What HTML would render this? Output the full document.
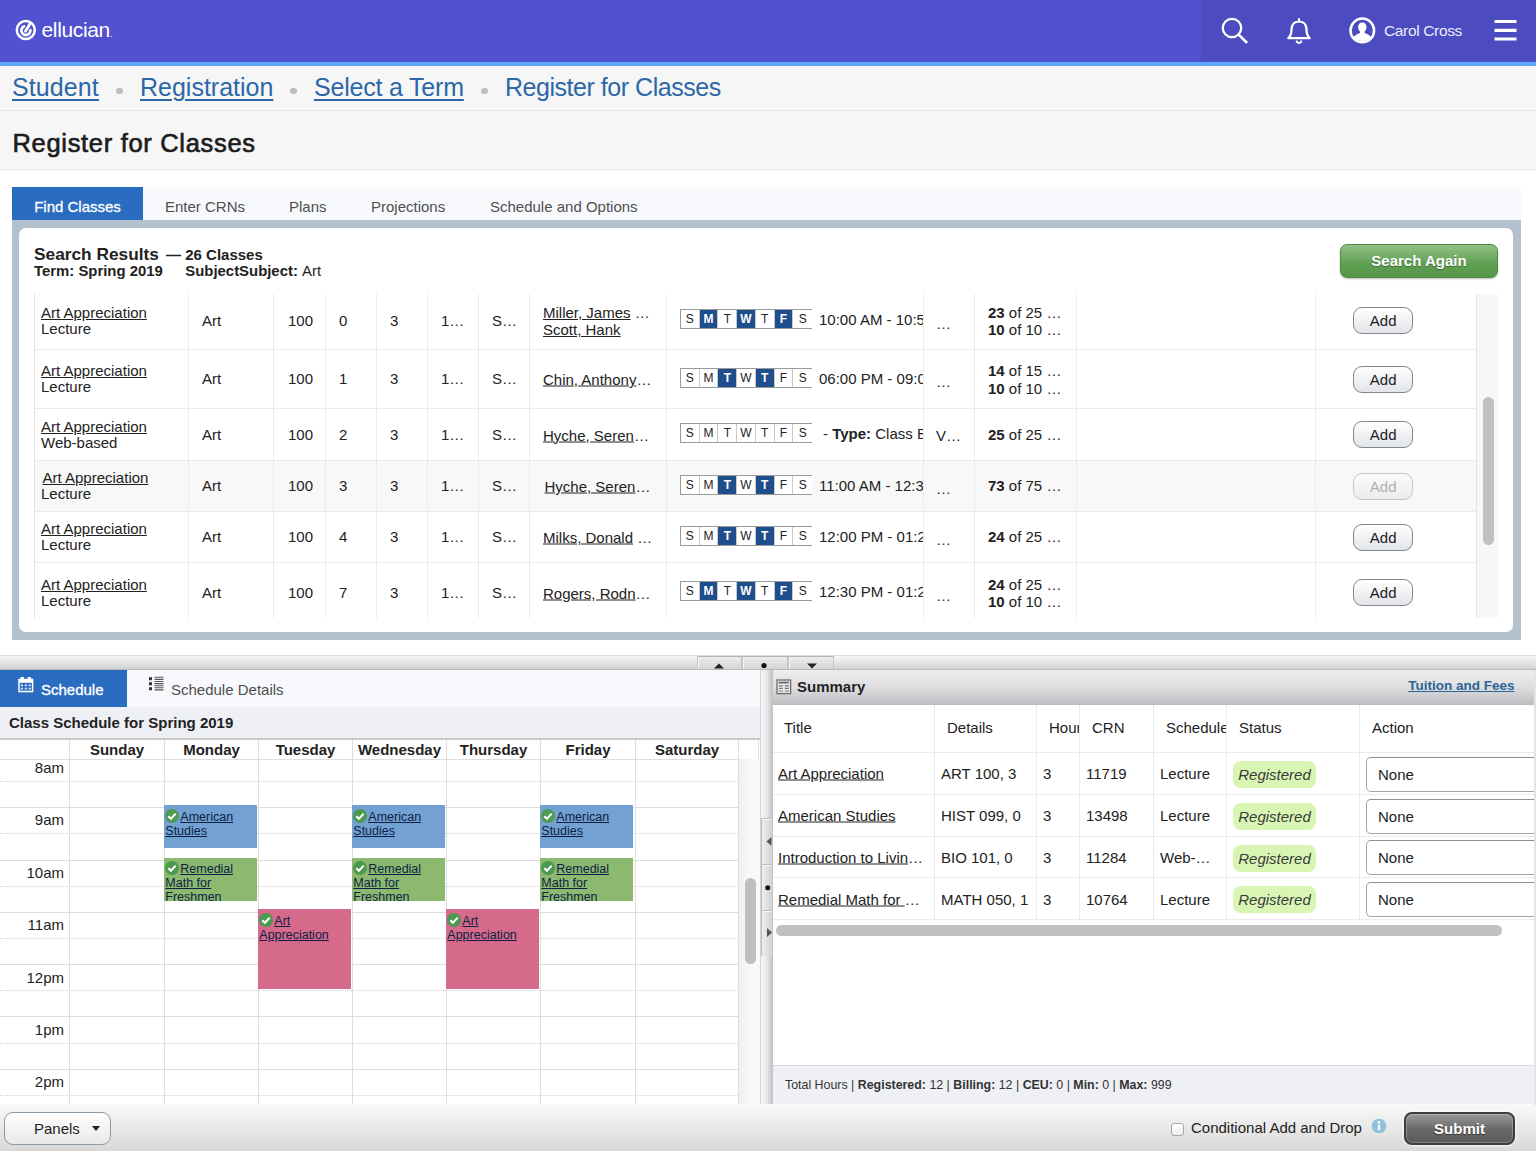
<!DOCTYPE html>
<html lang="en">
<head>
<meta charset="utf-8">
<title>Register for Classes</title>
<style>
*{box-sizing:border-box;margin:0;padding:0}
html,body{width:1536px;height:1151px;overflow:hidden;background:#fff;font-family:"Liberation Sans",Arial,sans-serif;color:#222;}
.abs{position:absolute}
a{color:inherit}
/* header */
#hdr{position:absolute;left:0;top:0;width:1536px;height:62px;background:#5252d0}
#hdr .right{position:absolute;left:1201px;top:0;width:335px;height:62px;background:#4c4bbf}
#stripe{position:absolute;left:0;top:61px;width:1536px;height:5.500px;background:linear-gradient(#3f56c6 0,#3f56c6 1px,#66a6ff 1.500px,#5a9fe2)}
#logo{position:absolute;left:41.500px;top:18px;font-size:21px;color:#fff;letter-spacing:-0.35px}
#user{position:absolute;left:1384px;top:22px;font-size:15.500px;color:#ececfb;letter-spacing:-0.35px}
/* breadcrumb */
#bc{position:absolute;left:0;top:66px;width:1536px;height:45px;background:#f6f6f6;border-bottom:1px solid #e6e6e6}
#bc span,#bc a{position:absolute;top:7px;font-size:25px;color:#2c67a8;white-space:nowrap}
#bc a{text-decoration:underline;text-decoration-thickness:1.600px;text-underline-offset:3px}
#bc i{position:absolute;top:21.500px;width:6.500px;height:6.500px;margin-left:.8px;border-radius:4px;background:#bdbdbd}
#ttl{position:absolute;left:0;top:111px;width:1536px;height:59px;background:#f6f6f6;border-bottom:1px solid #e6e6e6}
#ttl h1{position:absolute;left:12.500px;top:18px;font-size:25.500px;letter-spacing:.68px;font-weight:normal;-webkit-text-stroke:.65px #1c1c1c;color:#1c1c1c;white-space:nowrap}
/* tabs */
#tabs{position:absolute;left:12px;top:187px;width:1509px;height:33px;background:#f8f9fc}
#tabs .act{-webkit-text-stroke:.3px #fff;position:absolute;left:0;top:0;width:131px;height:33px;background:#2a6cc0;color:#fff;font-size:15px;text-align:center;line-height:40px}
#tabs span{position:absolute;top:0;font-size:15px;color:#4f4f4f;line-height:40px;white-space:nowrap}
#wrap{position:absolute;left:12px;top:220px;width:1509px;height:420px;background:#b3c0cd}
#panel{position:absolute;left:7px;top:8px;width:1494px;height:404px;background:#fff;border-radius:7px;overflow:hidden}

/* search panel */
#sr1{position:absolute;left:15px;top:15.500px;font-size:15px;font-weight:bold;color:#222;white-space:nowrap}
#sr1 b{font-size:17.300px;margin-right:3px}
#sr2{position:absolute;left:15px;top:35.200px;font-size:14.900px;font-weight:bold;color:#222;white-space:nowrap}
#sr2 span{font-weight:normal}
#again{position:absolute;left:1321px;top:16px;width:158px;height:34px;border:1px solid #4b8a3f;border-radius:7px;background:linear-gradient(#93c088,#5f9f52 60%,#56964a);color:#fff;font-weight:bold;font-size:15px;text-align:center;line-height:31px;text-shadow:0 1px 1px rgba(0,0,0,.35);box-shadow:0 1px 2px rgba(0,0,0,.25)}
#grid{position:absolute;left:15px;top:66px;width:1443px;height:323.500px;overflow:hidden;border-left:1px solid #e3e3e3;border-right:1px solid #e3e3e3}
.row{position:absolute;left:0;width:1441px;border-bottom:1px solid #ebebeb;background:#fff}
.row.alt{background:#f8f8f8}
.c{position:absolute;top:0;bottom:0;border-left:1px solid #ebebeb;font-size:15px;color:#222;white-space:nowrap;overflow:hidden}
.c .t{position:absolute;left:13px;top:50%;transform:translateY(-50%);line-height:16px}
.c a{text-decoration:underline;color:#222}
.days{position:absolute;left:13px;top:50%;margin-top:-11.500px;height:20px;width:132px;border:1px solid #9a9a9a;border-right:none;background:#fff;display:flex}
.days i{display:block;width:18.800px;height:18px;border-right:1px solid #c9c9c9;font-style:normal;font-size:12px;line-height:19.500px;text-align:center;color:#222}
.days i:last-child{border-right:none}
.days i.on{background:#1f4e8c;color:#fff;font-weight:bold}
.tm{position:absolute;left:152px;top:50%;transform:translateY(-50%);margin-top:-1.500px;font-size:15px}
.add{position:absolute;left:37.700px;top:50%;margin-top:-13.500px;width:60px;height:27px;border:1.300px solid #7f8791;border-radius:9px;background:linear-gradient(#fff,#e2e4e9);font-size:15px;text-align:center;line-height:25px;color:#222}
.add.dis{color:#b0b0b0;border-color:#c6c6c6;background:linear-gradient(#fbfbfb,#ececec)}
#vsb{position:absolute;left:1458px;top:66px;width:21px;height:323.500px;background:#f7f7f7}
#vsb i{position:absolute;left:6px;top:103px;width:10.500px;height:148px;border-radius:6px;background:#c1c1c1}

/* splitter */
#hsplit{position:absolute;left:0;top:655px;width:1536px;height:15px;background:linear-gradient(#f4f4f4,#e6e6e6 50%,#d2d2d2);border-top:1px solid #dedede;border-bottom:1px solid #b9b9b9}
#hsplit i{position:absolute;top:0;height:13px;border:1px solid #c4c4c4;border-top-color:#b4b4b4;border-bottom:none;background:linear-gradient(#ececec,#d6d6d6);box-shadow:inset 1px 0 0 #f6f6f6}
#hsplit svg{position:absolute;left:0;top:0}
/* schedule panel */
#sch{position:absolute;left:0;top:670px;width:761px;height:435px;background:#fff;overflow:hidden}
#stabs{position:absolute;left:0;top:0;width:761px;height:37px;background:#f8f9fc}
#stabs .act{-webkit-text-stroke:.3px #fff;position:absolute;left:0;top:0;width:127px;height:37px;background:#2a6cc0;color:#fff;font-size:15px;line-height:39px;padding-left:41px}
#stabs span{position:absolute;left:171px;top:0;line-height:39px;font-size:15px;color:#4f4f4f}
#ctitle{position:absolute;left:0;top:37px;width:761px;height:33px;background:#eef0f5;border-bottom:2px solid #c9c9c9;font-size:15px;font-weight:bold;color:#222;padding-left:9px;line-height:31px}
#cal{position:absolute;left:0;top:70px;width:761px;height:365px;background:#fff}
#cal .vl{position:absolute;top:0;width:1px;height:365px;background:#dedede}
#cal .hl{position:absolute;left:0;width:738px;height:1px;background:#dedede}
#cal .dl{position:absolute;left:0;width:738px;height:0;border-top:1px dotted #d4d4d4}
#cal .dh{position:absolute;top:0;height:19px;font-size:15px;font-weight:bold;text-align:center;line-height:20px;color:#222}
#cal .hr{position:absolute;left:0;width:64px;text-align:right;font-size:15px;color:#222;line-height:17px}
.ev{position:absolute;width:92.400px;overflow:hidden;font-size:12.500px;line-height:14px;color:#0d1f44;padding:3.500px 1px 0 1px}
.ev a{text-decoration:underline}
.ev svg{display:inline-block;vertical-align:-2px;margin-right:1px}
#cvsb{position:absolute;left:745.300px;top:208px;width:10.400px;height:85.500px;border-radius:5.200px;background:#bfbfbf}
/* vertical splitter */
#vsplit{position:absolute;left:760px;top:670px;width:12px;height:435px;background:linear-gradient(90deg,#f7f7f7,#e6e6e6 55%,#c4c4c4);border-left:1px solid #d4d4d4}
#vsplit i{position:absolute;left:0;width:11px;height:46px;border:1px solid #bdbdbd;border-right:none;border-bottom:none;background:linear-gradient(90deg,#eeeeee,#d2d2d2);box-shadow:inset 0 1px 0 #f8f8f8}
#ctrack{position:absolute;left:739px;top:19px;width:22px;height:346px;background:linear-gradient(90deg,#f0f0f0,#f8f8f8 40%,#fafafa)}
/* summary */
#sum{position:absolute;left:772px;top:670px;width:764px;height:435px;background:#fff;border-left:1px solid #c4c4c4;overflow:hidden}
#sumh{position:absolute;left:0;top:0;width:762px;height:35px;background:linear-gradient(#eeeeee,#dedee0 50%,#bdbdc1);font-size:15px;font-weight:bold;color:#222;line-height:33px;padding-left:24px}
#sumh a{position:absolute;right:20.500px;top:-1px;font-size:13.500px;color:#2c6496;text-decoration:underline}
#sum .sr{position:absolute;left:0;width:764px;border-bottom:1px solid #ebebeb}
#sum .sc{position:absolute;top:0;bottom:0;border-left:1px solid #ebebeb;font-size:15px;white-space:nowrap;overflow:hidden;color:#222}
#sum .sc span{position:absolute;left:6px;top:50%;transform:translateY(-50%)}
#sum .sc a{text-decoration:underline}
.reg{position:absolute;left:6px;top:50%;margin-top:-12.300px;height:27px;width:83px;border-radius:8px;background:#d9f5b3;font-style:italic;font-size:15px;color:#3a3a3a;line-height:28px;text-align:center}
.sel{position:absolute;left:6px;top:50%;margin-top:-16.500px;height:35px;width:190px;border:1px solid #a3a3a3;border-top-color:#8e8e8e;border-radius:5px;background:#fff;font-size:15px;line-height:33px;padding-left:11px;color:#222}
#hsb{position:absolute;left:3px;top:255px;width:726px;height:11px;border-radius:6px;background:#c1c1c1}
#sumf{position:absolute;left:0;top:395px;width:764px;height:40px;background:#eef0f5;border-top:1px solid #d6d8dd;font-size:12.400px;color:#333;line-height:38px;padding-left:12px}
/* footer */
#ftr{position:absolute;left:0;top:1104px;width:1536px;height:47px;background:linear-gradient(#f9f9f9,#ececec 40%,#d8d8d8)}
#panels{position:absolute;left:4px;top:8px;width:107px;height:33px;border:1.500px solid #8b98a5;border-radius:9px;background:linear-gradient(#fefefe,#e9e9e9);font-size:15px;line-height:31px;padding-left:29px;color:#222}
#panels:after{content:"";position:absolute;left:86.500px;top:12.500px;border:4.700px solid transparent;border-top:5.500px solid #222;border-bottom:none}
#cad{position:absolute;left:1191px;top:15px;font-size:15px;color:#222;white-space:nowrap}
#cb{position:absolute;left:1171px;top:19px;width:13px;height:13px;border:1px solid #a6a6a6;border-radius:3px;background:linear-gradient(#fff,#ececec)}
#submit{position:absolute;left:1404px;top:8px;width:111px;height:33px;border:2px solid #3d3d3d;border-radius:8px;background:linear-gradient(#9a9a9a,#6b6b6b 50%,#5a5a5a);color:#fff;font-size:15px;font-weight:bold;text-align:center;line-height:29px;text-shadow:0 1px 1px rgba(0,0,0,.5);box-shadow:inset 0 0 0 1px rgba(255,255,255,.22),0 0 2px 1px rgba(255,255,255,.8)}
</style>
</head>
<body>
<div id="hdr"><div class="right"></div>
<svg class="abs" style="left:0;top:0" width="1536" height="62" viewBox="0 0 1536 62" fill="none" stroke="#fff">
<circle cx="25.8" cy="30" r="9" stroke-width="2.5"/>
<path d="M25.2 26a4.5 4.500 0 1 0 5 3.200" stroke-width="2.700"/>
<path d="M30.400 23.200L25.400 31.200" stroke-width="2.700" stroke-linecap="round"/>
<circle cx="1232" cy="28" r="9.2" stroke-width="2.3"/>
<path d="M1238.6 34.6L1246.4 42.2" stroke-width="2.6" stroke-linecap="round"/>
<path d="M1299 19.2v2M1288.3 38.2c3-2.6 3.2-5.4 3.2-8.6 0-5 3.2-8.2 7.5-8.2s7.5 3.2 7.5 8.2c0 3.2 .2 6 3.2 8.6z" stroke-width="2.3" stroke-linejoin="round" stroke-linecap="round"/>
<path d="M1296.6 40.6a2.4 2.4 0 0 0 4.8 0" stroke-width="1.8"/>
<circle cx="1362.3" cy="30.4" r="11.8" stroke-width="2.5"/>
<path d="M1362.3 22.6c2.6 0 4.2 2 4.2 4.6 0 1.9-.8 3.4-1.9 4.3v1.4c2.8 .8 5.2 2.2 6.2 4.2a11 11 0 0 1-17 0c1-2 3.4-3.4 6.2-4.2v-1.4c-1.100-.9-1.900-2.400-1.900-4.300 0-2.600 1.600-4.600 4.200-4.600z" fill="#fff" stroke="none"/>
<path d="M1494.500 21.500h22M1494.500 30.400h22M1494.500 39h22" stroke-width="3.2"/>
</svg>
<div id="logo">ellucian<span style="font-size:9px">.</span></div>
<div id="user">Carol Cross</div>
</div>
<div id="stripe"></div>
<div id="bc">
<a style="left:12px;letter-spacing:.1px">Student</a><i style="left:115.500px"></i>
<a style="left:140px">Registration</a><i style="left:289.500px"></i>
<a style="left:314px;letter-spacing:-.2px">Select a Term</a><i style="left:480.500px"></i>
<span style="left:505px;letter-spacing:-.47px">Register for Classes</span>
</div>
<div id="ttl"><h1>Register for Classes</h1></div>
<div id="tabs">
<div class="act">Find Classes</div>
<span style="left:153px">Enter CRNs</span>
<span style="left:277px">Plans</span>
<span style="left:359px">Projections</span>
<span style="left:478px">Schedule and Options</span>
</div>
<div id="wrap"><div id="panel">
<div id="sr1"><b>Search Results</b> — 26 Classes</div>
<div id="sr2">Term: Spring 2019<i style="display:inline-block;width:22.500px"></i>SubjectSubject: <span>Art</span></div>
<div id="again">Search Again</div>
<div id="grid">
<div class="row" style="top:-2px;height:58px"><div class="c" style="left:-1px;width:154px;border-left:none"><div class="t" style="left:7px"><a>Art Appreciation</a><br>Lecture</div></div><div class="c" style="left:153px;width:85px"><div class="t">Art</div></div><div class="c" style="left:238px;width:52px"><div class="t" style="left:14px">100</div></div><div class="c" style="left:290px;width:51px"><div class="t">0</div></div><div class="c" style="left:341px;width:51px"><div class="t">3</div></div><div class="c" style="left:392px;width:51px"><div class="t">1…</div></div><div class="c" style="left:443px;width:51px"><div class="t">S…</div></div><div class="c" style="left:494px;width:137px"><div class="t" style="line-height:17px"><a>Miller, James</a> …<br><a>Scott, Hank</a></div></div><div class="c" style="left:631px;width:257px"><div class="days"><i>S</i><i class="on">M</i><i>T</i><i class="on">W</i><i>T</i><i class="on">F</i><i>S</i></div><div class="tm">10:00 AM - 10:50 AM</div></div><div class="c" style="left:888px;width:51px"><div class="t" style="left:12px;margin-top:3px">…</div></div><div class="c" style="left:939px;width:102px"><div class="t" style="line-height:17.500px"><b>23</b> of 25 …<br><b>10</b> of 10 …</div></div><div class="c" style="left:1041px;width:238.500px"></div><div class="c" style="left:1279.500px;width:161.500px"><div class="add">Add</div></div></div>
<div class="row" style="top:56px;height:59px"><div class="c" style="left:-1px;width:154px;border-left:none"><div class="t" style="left:7px"><a>Art Appreciation</a><br>Lecture</div></div><div class="c" style="left:153px;width:85px"><div class="t">Art</div></div><div class="c" style="left:238px;width:52px"><div class="t" style="left:14px">100</div></div><div class="c" style="left:290px;width:51px"><div class="t">1</div></div><div class="c" style="left:341px;width:51px"><div class="t">3</div></div><div class="c" style="left:392px;width:51px"><div class="t">1…</div></div><div class="c" style="left:443px;width:51px"><div class="t">S…</div></div><div class="c" style="left:494px;width:137px"><div class="t" style="line-height:17px"><a>Chin, Anthony</a>…</div></div><div class="c" style="left:631px;width:257px"><div class="days"><i>S</i><i>M</i><i class="on">T</i><i>W</i><i class="on">T</i><i>F</i><i>S</i></div><div class="tm">06:00 PM - 09:00 PM</div></div><div class="c" style="left:888px;width:51px"><div class="t" style="left:12px;margin-top:3px">…</div></div><div class="c" style="left:939px;width:102px"><div class="t" style="line-height:17.500px"><b>14</b> of 15 …<br><b>10</b> of 10 …</div></div><div class="c" style="left:1041px;width:238.500px"></div><div class="c" style="left:1279.500px;width:161.500px"><div class="add">Add</div></div></div>
<div class="row" style="top:115px;height:52px"><div class="c" style="left:-1px;width:154px;border-left:none"><div class="t" style="left:7px"><a>Art Appreciation</a><br>Web-based</div></div><div class="c" style="left:153px;width:85px"><div class="t">Art</div></div><div class="c" style="left:238px;width:52px"><div class="t" style="left:14px">100</div></div><div class="c" style="left:290px;width:51px"><div class="t">2</div></div><div class="c" style="left:341px;width:51px"><div class="t">3</div></div><div class="c" style="left:392px;width:51px"><div class="t">1…</div></div><div class="c" style="left:443px;width:51px"><div class="t">S…</div></div><div class="c" style="left:494px;width:137px"><div class="t" style="line-height:17px"><a>Hyche, Seren</a>…</div></div><div class="c" style="left:631px;width:257px"><div class="days"><i>S</i><i>M</i><i>T</i><i>W</i><i>T</i><i>F</i><i>S</i></div><div class="tm" style="left:156px">- <b>Type:</b> Class Begin</div></div><div class="c" style="left:888px;width:51px"><div class="t" style="left:12px;margin-top:1px">V…</div></div><div class="c" style="left:939px;width:102px"><div class="t" style="line-height:17.500px"><b>25</b> of 25 …</div></div><div class="c" style="left:1041px;width:238.500px"></div><div class="c" style="left:1279.500px;width:161.500px"><div class="add">Add</div></div></div>
<div class="row alt" style="top:167px;height:51px"><div class="c" style="left:-1px;width:154px;border-left:none"><div class="t" style="left:7px"><a style="margin-left:1.500px">Art Appreciation</a><br>Lecture</div></div><div class="c" style="left:153px;width:85px"><div class="t">Art</div></div><div class="c" style="left:238px;width:52px"><div class="t" style="left:14px">100</div></div><div class="c" style="left:290px;width:51px"><div class="t">3</div></div><div class="c" style="left:341px;width:51px"><div class="t">3</div></div><div class="c" style="left:392px;width:51px"><div class="t">1…</div></div><div class="c" style="left:443px;width:51px"><div class="t">S…</div></div><div class="c" style="left:494px;width:137px"><div class="t" style="line-height:17px;left:14.500px"><a>Hyche, Seren</a>…</div></div><div class="c" style="left:631px;width:257px"><div class="days"><i>S</i><i>M</i><i class="on">T</i><i>W</i><i class="on">T</i><i>F</i><i>S</i></div><div class="tm">11:00 AM - 12:30 PM</div></div><div class="c" style="left:888px;width:51px"><div class="t" style="left:12px;margin-top:3px">…</div></div><div class="c" style="left:939px;width:102px"><div class="t" style="line-height:17.500px"><b>73</b> of 75 …</div></div><div class="c" style="left:1041px;width:238.500px"></div><div class="c" style="left:1279.500px;width:161.500px"><div class="add dis">Add</div></div></div>
<div class="row" style="top:218px;height:51px"><div class="c" style="left:-1px;width:154px;border-left:none"><div class="t" style="left:7px"><a>Art Appreciation</a><br>Lecture</div></div><div class="c" style="left:153px;width:85px"><div class="t">Art</div></div><div class="c" style="left:238px;width:52px"><div class="t" style="left:14px">100</div></div><div class="c" style="left:290px;width:51px"><div class="t">4</div></div><div class="c" style="left:341px;width:51px"><div class="t">3</div></div><div class="c" style="left:392px;width:51px"><div class="t">1…</div></div><div class="c" style="left:443px;width:51px"><div class="t">S…</div></div><div class="c" style="left:494px;width:137px"><div class="t" style="line-height:17px"><a>Milks, Donald</a> …</div></div><div class="c" style="left:631px;width:257px"><div class="days"><i>S</i><i>M</i><i class="on">T</i><i>W</i><i class="on">T</i><i>F</i><i>S</i></div><div class="tm">12:00 PM - 01:20 PM</div></div><div class="c" style="left:888px;width:51px"><div class="t" style="left:12px;margin-top:3px">…</div></div><div class="c" style="left:939px;width:102px"><div class="t" style="line-height:17.500px"><b>24</b> of 25 …</div></div><div class="c" style="left:1041px;width:238.500px"></div><div class="c" style="left:1279.500px;width:161.500px"><div class="add">Add</div></div></div>
<div class="row" style="top:269px;height:60px"><div class="c" style="left:-1px;width:154px;border-left:none"><div class="t" style="left:7px"><a>Art Appreciation</a><br>Lecture</div></div><div class="c" style="left:153px;width:85px"><div class="t">Art</div></div><div class="c" style="left:238px;width:52px"><div class="t" style="left:14px">100</div></div><div class="c" style="left:290px;width:51px"><div class="t">7</div></div><div class="c" style="left:341px;width:51px"><div class="t">3</div></div><div class="c" style="left:392px;width:51px"><div class="t">1…</div></div><div class="c" style="left:443px;width:51px"><div class="t">S…</div></div><div class="c" style="left:494px;width:137px"><div class="t" style="line-height:17px"><a>Rogers, Rodn</a>…</div></div><div class="c" style="left:631px;width:257px"><div class="days"><i>S</i><i class="on">M</i><i>T</i><i class="on">W</i><i>T</i><i class="on">F</i><i>S</i></div><div class="tm">12:30 PM - 01:20 PM</div></div><div class="c" style="left:888px;width:51px"><div class="t" style="left:12px;margin-top:3px">…</div></div><div class="c" style="left:939px;width:102px"><div class="t" style="line-height:17.500px"><b>24</b> of 25 …<br><b>10</b> of 10 …</div></div><div class="c" style="left:1041px;width:238.500px"></div><div class="c" style="left:1279.500px;width:161.500px"><div class="add">Add</div></div></div>
</div>
<div id="vsb"><i></i></div>
</div></div>
<div id="hsplit"><i style="left:697px;width:45px"></i><i style="left:742px;width:46px"></i><i style="left:788px;width:46px"></i>
<svg width="1536" height="15" viewBox="0 0 1536 15"><path d="M714 12.500l5-5 5 5z" fill="#222"/><circle cx="764" cy="9.500" r="2.600" fill="#111"/><path d="M807 7.500h10l-5 5z" fill="#222"/></svg></div>
<div id="sch">
<div id="stabs"><div class="act">Schedule</div><svg class="abs" style="left:18px;top:6px" width="16" height="17" viewBox="0 0 16 17"><path d="M1 3.600h13.600v12H1z" fill="none" stroke="#fff" stroke-width="1.500"/><path d="M1 3.600h13.600v3.200H1z" fill="#fff"/><path d="M2.600 1h3.200v3H2.600zM9.800 1h3.200v3H9.800z" fill="#fff"/><path d="M2.800 8.400h2.200v1.800H2.800zM6.700 8.400h2.200v1.800H6.700zM10.600 8.400h2.200v1.800h-2.200zM2.800 11.800h2.200v1.800H2.800zM6.700 11.800h2.200v1.800H6.700zM10.600 11.800h2.200v1.800h-2.200z" fill="#d6e4f6"/></svg><svg class="abs" style="left:148px;top:6px" width="17" height="16" viewBox="0 0 17 16"><path d="M1 1.300h3v3H1zM1 6.300h3v3H1zM1 11.300h3v3H1z" fill="#333"/><path d="M6.500 1.300h9M6.500 3.400h9M6.500 5.500h9M6.500 7.600h9M6.500 9.700h9M6.500 11.800h9M6.500 13.900h9" stroke="#555" stroke-width="1.100"/></svg><span>Schedule Details</span></div>
<div id="ctitle">Class Schedule for Spring 2019</div>
<div id="cal">
<div class="vl" style="left:69px"></div>
<div class="vl" style="left:164px"></div>
<div class="vl" style="left:258px"></div>
<div class="vl" style="left:352px"></div>
<div class="vl" style="left:446px"></div>
<div class="vl" style="left:540px"></div>
<div class="vl" style="left:635px"></div>
<div class="vl" style="left:738px"></div>
<div class="vl" style="left:758px;height:19px"></div>
<div class="dh" style="left:70px;width:94px">Sunday</div>
<div class="dh" style="left:165px;width:93px">Monday</div>
<div class="dh" style="left:259px;width:93px">Tuesday</div>
<div class="dh" style="left:353px;width:93px">Wednesday</div>
<div class="dh" style="left:447px;width:93px">Thursday</div>
<div class="dh" style="left:541px;width:94px">Friday</div>
<div class="dh" style="left:636px;width:102px">Saturday</div>
<div class="hl" style="top:19px"></div>
<div class="hl" style="top:67px"></div>
<div class="hl" style="top:120px"></div>
<div class="hl" style="top:172px"></div>
<div class="hl" style="top:224px"></div>
<div class="hl" style="top:276px"></div>
<div class="hl" style="top:329px"></div>
<div class="dl" style="top:41px"></div>
<div class="dl" style="top:93px"></div>
<div class="dl" style="top:146px"></div>
<div class="dl" style="top:198px"></div>
<div class="dl" style="top:250px"></div>
<div class="dl" style="top:303px"></div>
<div class="dl" style="top:355px"></div>
<div class="hr" style="top:19px">8am</div>
<div class="hr" style="top:71px">9am</div>
<div class="hr" style="top:124px">10am</div>
<div class="hr" style="top:176px">11am</div>
<div class="hr" style="top:229px">12pm</div>
<div class="hr" style="top:281px">1pm</div>
<div class="hr" style="top:333px">2pm</div>
<div class="ev" style="left:164.3px;top:65px;height:43px;background:#72a1d2"><svg width="14" height="14" viewBox="0 0 14 14"><circle cx="7" cy="7" r="7" fill="#4c9a4f"/><path d="M3.3 7.3l2.6 2.5 4.8-5.2" fill="none" stroke="#fff" stroke-width="2"/></svg><a>American Studies</a></div>
<div class="ev" style="left:164.3px;top:117.500px;height:43px;background:#8cb870"><svg width="14" height="14" viewBox="0 0 14 14"><circle cx="7" cy="7" r="7" fill="#4c9a4f"/><path d="M3.3 7.3l2.6 2.5 4.8-5.2" fill="none" stroke="#fff" stroke-width="2"/></svg><a>Remedial Math for Freshmen</a></div>
<div class="ev" style="left:352.3px;top:65px;height:43px;background:#72a1d2"><svg width="14" height="14" viewBox="0 0 14 14"><circle cx="7" cy="7" r="7" fill="#4c9a4f"/><path d="M3.3 7.3l2.6 2.5 4.8-5.2" fill="none" stroke="#fff" stroke-width="2"/></svg><a>American Studies</a></div>
<div class="ev" style="left:352.3px;top:117.500px;height:43px;background:#8cb870"><svg width="14" height="14" viewBox="0 0 14 14"><circle cx="7" cy="7" r="7" fill="#4c9a4f"/><path d="M3.3 7.3l2.6 2.5 4.8-5.2" fill="none" stroke="#fff" stroke-width="2"/></svg><a>Remedial Math for Freshmen</a></div>
<div class="ev" style="left:540.3px;top:65px;height:43px;background:#72a1d2"><svg width="14" height="14" viewBox="0 0 14 14"><circle cx="7" cy="7" r="7" fill="#4c9a4f"/><path d="M3.3 7.3l2.6 2.5 4.8-5.2" fill="none" stroke="#fff" stroke-width="2"/></svg><a>American Studies</a></div>
<div class="ev" style="left:540.3px;top:117.500px;height:43px;background:#8cb870"><svg width="14" height="14" viewBox="0 0 14 14"><circle cx="7" cy="7" r="7" fill="#4c9a4f"/><path d="M3.3 7.3l2.6 2.5 4.8-5.2" fill="none" stroke="#fff" stroke-width="2"/></svg><a>Remedial Math for Freshmen</a></div>
<div class="ev" style="left:258.3px;top:169px;height:80px;background:#d56a8b"><svg width="14" height="14" viewBox="0 0 14 14"><circle cx="7" cy="7" r="7" fill="#4c9a4f"/><path d="M3.3 7.3l2.6 2.5 4.8-5.2" fill="none" stroke="#fff" stroke-width="2"/></svg><a>Art Appreciation</a></div>
<div class="ev" style="left:446.3px;top:169px;height:80px;background:#d56a8b"><svg width="14" height="14" viewBox="0 0 14 14"><circle cx="7" cy="7" r="7" fill="#4c9a4f"/><path d="M3.3 7.3l2.6 2.5 4.8-5.2" fill="none" stroke="#fff" stroke-width="2"/></svg><a>Art Appreciation</a></div>

<div id="ctrack"></div>
<div id="cvsb" style="top:138px"></div>
</div>
</div>
<div id="vsplit"><i style="top:148px"></i><i style="top:194px"></i><i style="top:239.500px"></i>
<svg class="abs" style="left:0;top:0" width="12" height="435" viewBox="0 0 12 435"><path d="M10.500 167v9l-5-4.500z" fill="#555"/><circle cx="6.700" cy="217.800" r="2.500" fill="#111"/><path d="M6 258v9l5-4.500z" fill="#555"/></svg></div>
<div id="sum">
<div id="sumh"><svg class="abs" style="left:3px;top:9px" width="16" height="16" viewBox="0 0 16 16"><rect x="1" y="1" width="13.600" height="13.600" fill="#e9e9e9" stroke="#6e6e6e" stroke-width="1.300"/><path d="M2.800 3.600h10" stroke="#666" stroke-width="1.800"/><path d="M2.800 6.800h4M8.800 6.800h4M2.800 9.400h4M8.800 9.400h4M2.800 12h4M8.800 12h4" stroke="#777" stroke-width="1.200"/></svg>Summary<a>Tuition and Fees</a></div>
<div class="sr" style="top:35px;height:47.700px"><div class="sc" style="left:-1px;width:162px;border-left:none"><span style="left:12px;margin-top:-1px">Title</span></div><div class="sc" style="left:161px;width:102px"><span style="left:12px;margin-top:-1px">Details</span></div><div class="sc" style="left:263px;width:43px"><span style="left:12px;margin-top:-1px">Hours</span></div><div class="sc" style="left:306px;width:74px"><span style="left:12px;margin-top:-1px">CRN</span></div><div class="sc" style="left:380px;width:73px"><span style="left:12px;margin-top:-1px">Schedule Type</span></div><div class="sc" style="left:453px;width:133px"><span style="left:12px;margin-top:-1px">Status</span></div><div class="sc" style="left:586px;width:177px"><span style="left:12px;margin-top:-1px">Action</span></div></div>
<div class="sr" style="top:82.7px;height:42.300px"><div class="sc" style="left:-1px;width:162px;border-left:none"><span><a>Art Appreciation</a></span></div><div class="sc" style="left:161px;width:102px"><span>ART 100, 3</span></div><div class="sc" style="left:263px;width:43px"><span>3</span></div><div class="sc" style="left:306px;width:74px"><span>11719</span></div><div class="sc" style="left:380px;width:73px"><span>Lecture</span></div><div class="sc" style="left:453px;width:133px"><div class="reg">Registered</div></div><div class="sc" style="left:586px;width:177px"><div class="sel">None</div></div></div>
<div class="sr" style="top:124.5px;height:42.300px"><div class="sc" style="left:-1px;width:162px;border-left:none"><span><a>American Studies</a></span></div><div class="sc" style="left:161px;width:102px"><span>HIST 099, 0</span></div><div class="sc" style="left:263px;width:43px"><span>3</span></div><div class="sc" style="left:306px;width:74px"><span>13498</span></div><div class="sc" style="left:380px;width:73px"><span>Lecture</span></div><div class="sc" style="left:453px;width:133px"><div class="reg">Registered</div></div><div class="sc" style="left:586px;width:177px"><div class="sel">None</div></div></div>
<div class="sr" style="top:166.2px;height:42.300px"><div class="sc" style="left:-1px;width:162px;border-left:none"><span><a>Introduction to Livin</a>…</span></div><div class="sc" style="left:161px;width:102px"><span>BIO 101, 0</span></div><div class="sc" style="left:263px;width:43px"><span>3</span></div><div class="sc" style="left:306px;width:74px"><span>11284</span></div><div class="sc" style="left:380px;width:73px"><span>Web-…</span></div><div class="sc" style="left:453px;width:133px"><div class="reg">Registered</div></div><div class="sc" style="left:586px;width:177px"><div class="sel">None</div></div></div>
<div class="sr" style="top:207.9px;height:42.300px"><div class="sc" style="left:-1px;width:162px;border-left:none"><span><a>Remedial Math for </a>…</span></div><div class="sc" style="left:161px;width:102px"><span>MATH 050, 1</span></div><div class="sc" style="left:263px;width:43px"><span>3</span></div><div class="sc" style="left:306px;width:74px"><span>10764</span></div><div class="sc" style="left:380px;width:73px"><span>Lecture</span></div><div class="sc" style="left:453px;width:133px"><div class="reg">Registered</div></div><div class="sc" style="left:586px;width:177px"><div class="sel">None</div></div></div>
<div id="hsb"></div>
<div id="sumf">Total Hours | <b>Registered:</b> 12 | <b>Billing:</b> 12 | <b>CEU:</b> 0 | <b>Min:</b> 0 | <b>Max:</b> 999</div>
</div>
<div id="ftr"><div id="panels">Panels</div><div id="cb"></div><div id="cad">Conditional Add and Drop</div><svg class="abs" style="left:1371px;top:14px" width="16" height="16" viewBox="0 0 16 16"><circle cx="8" cy="8" r="7.300" fill="#90c2dd"/><circle cx="8" cy="4.400" r="1.400" fill="#fff"/><path d="M8 6.800v5.400" stroke="#fff" stroke-width="2.200" fill="none"/></svg><div id="submit">Submit</div></div>
<div class="abs" style="left:1534px;top:670px;width:2px;height:435px;background:#e4e4e4"></div>
</body>
</html>
